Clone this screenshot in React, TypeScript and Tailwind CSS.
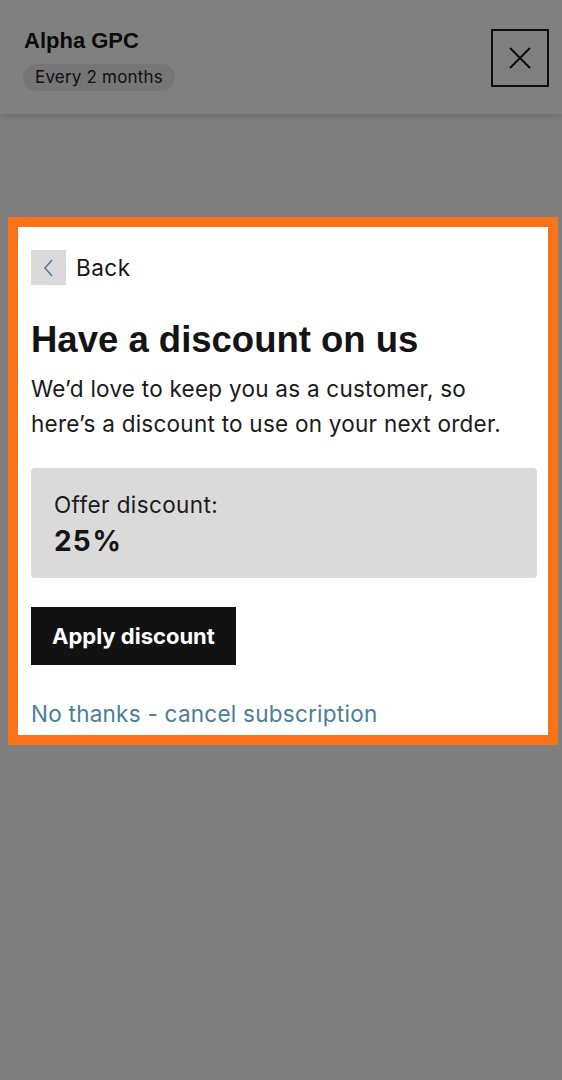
import React from "react";

export default function App() {
  return (
    <div className="min-h-[1080px] w-full bg-[#7f7f7f] font-['Inter',sans-serif] text-[#111]">
      <header className="relative h-[114px] bg-[#808080] shadow-[0_3px_6px_rgba(0,0,0,0.12)] flex items-start justify-between pl-[24px] pr-[13px]">
        <div className="pt-[27px]">
          <div className="font-['Liberation_Sans',Arial,sans-serif] text-[22px] leading-[28px] font-bold text-[#0b0b0b]">Alpha GPC</div>
          <div className="mt-[9px] inline-flex h-[27px] items-center rounded-full bg-[#767676] px-[12px] ml-[-1px] text-[17px] tracking-[0.2px] text-[#0f0f0f]">
            Every 2 months
          </div>
        </div>
        <button className="mt-[29px] flex h-[58px] w-[58px] items-center justify-center border-[2.5px] border-[#0d0d0d]">
          <svg width="22" height="22" viewBox="0 0 22 22" fill="none" stroke="#0d0d0d" strokeWidth="2">
            <path d="M1 1L21 21M21 1L1 21" />
          </svg>
        </button>
      </header>

      <div className="mt-[103px] ml-[8px] w-[550px] border-[10px] border-[#fa7318] bg-white pl-[13px] pr-[11px] pt-[23px] pb-[5px]">
        <div className="flex items-center gap-[10px]">
          <div className="flex h-[35px] w-[35px] items-center justify-center bg-[#dadada]">
            <svg width="12" height="20" viewBox="0 0 12 20" fill="none" stroke="#4f7f9f" strokeWidth="1.6">
              <path d="M9 2L2 10L9 18" />
            </svg>
          </div>
          <span className="text-[22.5px] leading-[35px] tracking-[0.5px] text-[#161616]">Back</span>
        </div>

        <h1 className="mt-[33px] font-['Liberation_Sans',Arial,sans-serif] text-[36.5px] leading-[43px] font-bold text-[#141414]">Have a discount on us</h1>
        <p className="mt-[10px] text-[22.5px] leading-[35px] tracking-[0.25px] text-[#1a1a1a]">
          We’d love to keep you as a customer, so
          <br />
          here’s a discount to use on your next order.
        </p>

        <div className="mt-[27px] rounded-[4px] bg-[#dadada] px-[23px] pt-[20px] pb-[20px]">
          <div className="text-[22.5px] leading-[33px] tracking-[0.4px] text-[#1a1a1a]">Offer discount:</div>
          <div className="mt-[3px] text-[28px] leading-[34px] font-bold tracking-[1px] text-[#141414]">
            25<span className="ml-[1px]">%</span>
          </div>
        </div>

        <button className="mt-[29px] h-[58px] bg-[#121212] px-[21px] text-[22px] font-bold text-white">
          Apply discount
        </button>

        <div className="mt-[32px] text-[22.5px] leading-[33px] tracking-[0.25px] text-[#4b7d9e]">No thanks - cancel subscription</div>
      </div>
    </div>
  );
}
